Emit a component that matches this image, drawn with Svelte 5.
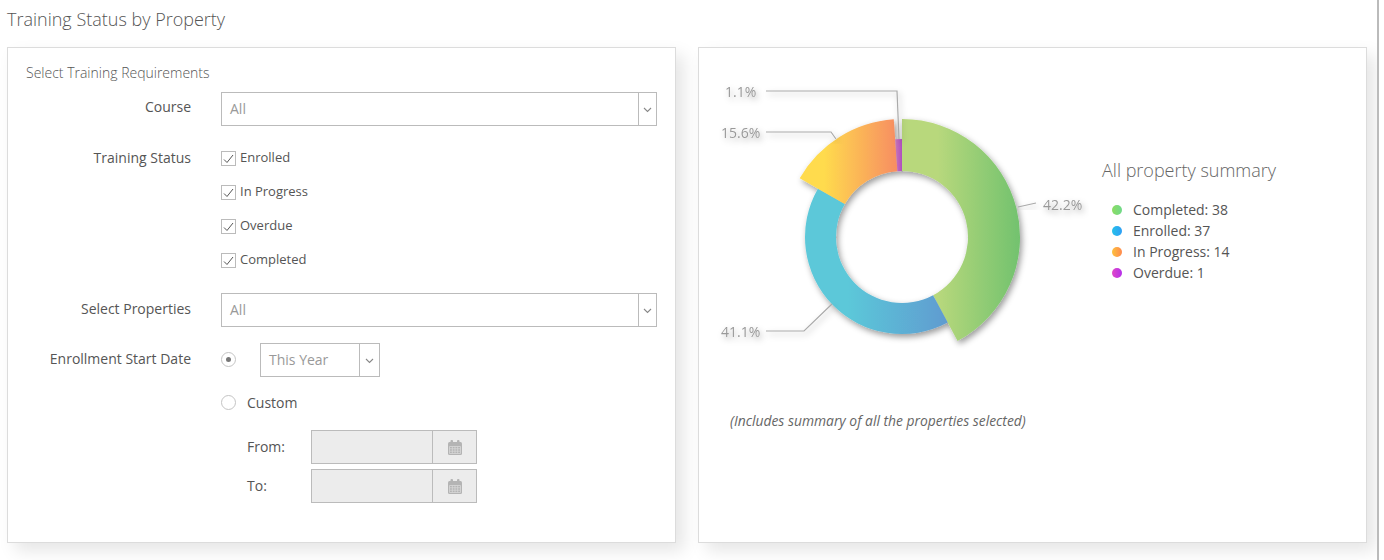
<script lang="ts">
  const CX = 902;
  const CY = 237;
  const INNER = 66;

  const slices = [
    { id: "green", pct: 42.2, r: 118, from: 0, to: 151.9 },
    { id: "blue", pct: 41.1, r: 97, from: 151.9, to: 299.9 },
    { id: "orange", pct: 15.6, r: 118, from: 299.9, to: 356 },
    { id: "purple", pct: 1.1, r: 98, from: 356, to: 360 },
  ];

  const labels = [
    { text: "1.1%", x: 725, y: 97, line: "766,91 897,91 899,139" },
    { text: "15.6%", x: 721, y: 138, line: "766,132 831,132 836,139" },
    { text: "41.1%", x: 721, y: 337, line: "766,331 804,331 832,304" },
    { text: "42.2%", x: 1043, y: 210, line: "1018,207 1036,203" },
  ];

  const legend = [
    { name: "Completed", count: 38, cls: "completed" },
    { name: "Enrolled", count: 37, cls: "enrolled" },
    { name: "In Progress", count: 14, cls: "progress" },
    { name: "Overdue", count: 1, cls: "overdue" },
  ];

  const statuses = ["Enrolled", "In Progress", "Overdue", "Completed"];

  function pt(r: number, deg: number) {
    const a = (deg * Math.PI) / 180;
    return `${(CX + r * Math.sin(a)).toFixed(2)} ${(CY - r * Math.cos(a)).toFixed(2)}`;
  }

  function arc(s: { r: number; from: number; to: number }) {
    const big = s.to - s.from > 180 ? 1 : 0;
    return `M${pt(s.r, s.from)} A${s.r} ${s.r} 0 ${big} 1 ${pt(s.r, s.to)} L${pt(INNER, s.to)} A${INNER} ${INNER} 0 ${big} 0 ${pt(INNER, s.from)} Z`;
  }
</script>

{#snippet chevron()}
  <span class="arrow">
    <svg width="9" height="6" viewBox="0 0 9 6"><polyline points="1,1 4.5,4.5 8,1" fill="none" stroke="#888" stroke-width="1.1" /></svg>
  </span>
{/snippet}

{#snippet calendar()}
  <span class="cal">
    <svg width="14" height="15" viewBox="0 0 14 15">
      <rect x="0" y="2" width="14" height="13" rx="1.5" fill="#b4b4b4" />
      <rect x="2.5" y="0" width="2.5" height="4" rx="1" fill="#b4b4b4" />
      <rect x="9" y="0" width="2.5" height="4" rx="1" fill="#b4b4b4" />
      <path d="M1.5 6.5h11v7h-11z M1.5 8.8h11 M1.5 11.2h11 M4.3 6.5v7 M7 6.5v7 M9.7 6.5v7" fill="none" stroke="#d8d8d8" stroke-width="0.8" />
    </svg>
  </span>
{/snippet}

<div class="page">
  <h1>Training Status by Property</h1>
  <div class="panels">
    <section class="panel form">
      <h2>Select Training Requirements</h2>

      <div class="row course">
        <span class="label">Course</span>
        <div class="select wide"><span class="value">All</span>{@render chevron()}</div>
      </div>

      <div class="row status">
        <span class="label">Training Status</span>
        <div class="checks">
          {#each statuses as s}
            <div class="check">
              <span class="box">
                <svg width="11" height="10" viewBox="0 0 11 10"><polyline points="1,5.5 4,8.5 10,1" fill="none" stroke="#555" stroke-width="1" /></svg>
              </span>
              <span class="check-text">{s}</span>
            </div>
          {/each}
        </div>
      </div>

      <div class="row props">
        <span class="label">Select Properties</span>
        <div class="select wide"><span class="value">All</span>{@render chevron()}</div>
      </div>

      <div class="row dates">
        <span class="label">Enrollment Start Date</span>
        <div class="date-opts">
          <div class="radio-row">
            <span class="radio on"></span>
            <div class="select year"><span class="value">This Year</span>{@render chevron()}</div>
          </div>
          <div class="radio-row custom">
            <span class="radio"></span>
            Custom
          </div>
          <div class="range">
            <span class="range-label">From:</span>
            <div class="date-input"><span class="blank"></span>{@render calendar()}</div>
          </div>
          <div class="range">
            <span class="range-label">To:</span>
            <div class="date-input"><span class="blank"></span>{@render calendar()}</div>
          </div>
        </div>
      </div>
    </section>

    <section class="panel summary">
      <div class="chart-col">
        <svg class="chart" width="390" height="350" viewBox="699 48 390 350">
          <defs>
            <linearGradient id="green">
              <stop offset="0.3" stop-color="#b8d87c" />
              <stop offset="1" stop-color="#72c26e" />
            </linearGradient>
            <linearGradient id="blue">
              <stop offset="0.3" stop-color="#5bc8d9" />
              <stop offset="1" stop-color="#5f9bd0" />
            </linearGradient>
            <linearGradient id="orange">
              <stop offset="0.25" stop-color="#ffdb4d" />
              <stop offset="1" stop-color="#f78d62" />
            </linearGradient>
            <linearGradient id="purple">
              <stop offset="0" stop-color="#c878b4" />
              <stop offset="1" stop-color="#b04ec0" />
            </linearGradient>
            <filter id="shadow" x="-20%" y="-20%" width="140%" height="140%">
              <feDropShadow dx="2" dy="3" stdDeviation="3" flood-color="#000" flood-opacity="0.4" />
            </filter>
            <filter id="soft" x="-30%" y="-60%" width="160%" height="220%">
              <feDropShadow dx="2" dy="3" stdDeviation="3" flood-color="#000" flood-opacity="0.32" />
            </filter>
          </defs>
          <g filter="url(#shadow)">
            {#each slices as s}
              <path d={arc(s)} fill="url(#{s.id})" />
            {/each}
          </g>
          {#each labels as l}
            <polyline points={l.line} fill="none" stroke="#aaa" stroke-width="1.2" filter="url(#soft)" />
            <text x={l.x} y={l.y} filter="url(#soft)">{l.text}</text>
          {/each}
        </svg>
        <p class="note">(Includes summary of all the properties selected)</p>
      </div>
      <div class="legend">
        <h3>All property summary</h3>
        <ul>
          {#each legend as item}
            <li><span class="dot {item.cls}"></span>{item.name}: {item.count}</li>
          {/each}
        </ul>
      </div>
    </section>
  </div>
</div>

<style>
  :global(body) {
    margin: 0;
    background: #fff;
  }

  .page {
    box-sizing: border-box;
    width: 1379px;
    height: 560px;
    overflow: hidden;
    border-right: 2px solid #bbb;
    padding: 7px 0 0 7px;
    font-family: "Open Sans", "Liberation Sans", sans-serif;
    font-size: 14px;
    color: #555;
  }

  h1 {
    margin: 0 0 15px;
    font-size: 18px;
    line-height: 25px;
    font-weight: 300;
    color: #555;
  }

  .panels {
    display: flex;
    gap: 22px;
  }

  .panel {
    box-sizing: border-box;
    width: 669px;
    height: 496px;
    background: #fff;
    border: 1px solid #dcdcdc;
    box-shadow: 8px 8px 16px rgba(0, 0, 0, 0.1);
  }

  .form {
    padding-top: 15px;
  }

  h2 {
    margin: 0 0 9px 18px;
    font-size: 14px;
    line-height: 20px;
    font-weight: 300;
    color: #555;
  }

  .row {
    display: flex;
  }
  .label {
    width: 183px;
    margin-right: 30px;
    text-align: right;
    line-height: 20px;
    flex: none;
  }
  .course {
    margin-bottom: 15px;
  }
  .course .label {
    padding-top: 5px;
  }
  .status {
    margin-bottom: 16px;
  }
  .status .label {
    padding-top: 7px;
  }
  .props {
    margin-bottom: 16px;
  }
  .props .label {
    padding-top: 6px;
  }
  .dates .label {
    padding-top: 6px;
  }

  .select {
    box-sizing: border-box;
    height: 34px;
    display: flex;
    border: 1px solid #bbb;
    background: #fff;
  }
  .select.wide {
    width: 436px;
  }
  .select.year {
    width: 120px;
    margin-left: 24px;
  }
  .value {
    flex: 1;
    padding-left: 8px;
    line-height: 32px;
    color: #999;
  }
  .arrow {
    width: 17px;
    flex: none;
    border-left: 1px solid #bbb;
    display: flex;
    align-items: center;
    justify-content: center;
  }
  .year .arrow {
    width: 19px;
  }
  .arrow svg {
    margin-top: 2px;
  }

  .check {
    height: 34px;
    display: flex;
    align-items: center;
    gap: 4px;
    font-size: 13px;
  }
  .check-text {
    margin-top: -2px;
  }
  .box {
    box-sizing: border-box;
    width: 15px;
    height: 15px;
    border: 1px solid #bbb;
    display: flex;
    align-items: center;
    justify-content: center;
    margin-top: 1px;
  }

  .radio-row {
    display: flex;
    align-items: center;
    height: 34px;
  }
  .radio {
    box-sizing: border-box;
    width: 15px;
    height: 15px;
    border: 1px solid #c4c4c4;
    border-radius: 50%;
    display: flex;
    align-items: center;
    justify-content: center;
    flex: none;
    margin-top: -2px;
  }
  .radio.on::after {
    content: "";
    width: 5px;
    height: 5px;
    border-radius: 50%;
    background: #777;
  }
  .custom {
    margin-top: 8px;
    margin-bottom: 11px;
    gap: 11px;
  }
  .custom .radio {
    margin-top: 0;
  }

  .range {
    display: flex;
    align-items: center;
    margin-bottom: 5px;
    padding-left: 26px;
  }
  .range-label {
    width: 64px;
    margin-top: -1px;
  }
  .date-input {
    box-sizing: border-box;
    width: 166px;
    height: 34px;
    display: flex;
    border: 1px solid #bbb;
    background: #ececec;
  }
  .blank {
    flex: 1;
  }
  .cal {
    width: 43px;
    flex: none;
    border-left: 1px solid #bbb;
    display: flex;
    align-items: center;
    justify-content: center;
  }

  .summary {
    display: flex;
  }
  .chart-col {
    width: 390px;
    flex: none;
  }
  .chart {
    display: block;
  }
  .chart text {
    font-size: 14px;
    fill: #999;
  }
  .note {
    margin: 14px 0 0 31px;
    font-size: 13.86px;
    line-height: 18px;
    font-style: italic;
    color: #666;
  }

  .legend {
    margin-left: 13px;
    padding-top: 109px;
  }
  h3 {
    margin: 0 0 16px;
    font-size: 18px;
    line-height: 26px;
    font-weight: 300;
    color: #666;
  }
  ul {
    margin: 0;
    padding: 0 0 0 10px;
    list-style: none;
  }
  li {
    display: flex;
    align-items: center;
    height: 21px;
    gap: 11px;
  }
  .dot {
    width: 10px;
    height: 10px;
    border-radius: 50%;
    flex: none;
  }
  .completed {
    background: linear-gradient(90deg, #8cdc62, #70d98a);
  }
  .enrolled {
    background: linear-gradient(90deg, #25c0ea, #2f9ff5);
  }
  .progress {
    background: linear-gradient(90deg, #fdc03c, #ff8a50);
  }
  .overdue {
    background: linear-gradient(90deg, #e048c8, #b530ea);
  }
</style>
